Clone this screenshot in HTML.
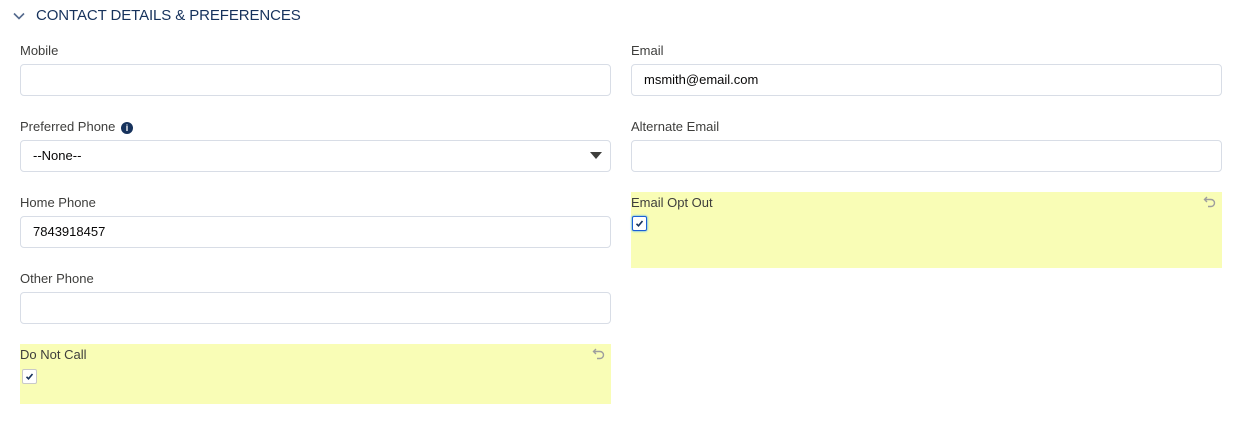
<!DOCTYPE html>
<html><head><style>
body{margin:0;width:1237px;height:424px;background:#fff;font-family:"Liberation Sans",sans-serif;position:relative;overflow:hidden}
.a{position:absolute}
.lbl{font-size:13px;color:#3e3e3c;line-height:16px}
.in{position:absolute;height:30px;border:1px solid #d8dde6;border-radius:4px;background:#fff;font-size:13px;color:#080707;line-height:30px;padding-left:12px;box-sizing:content-box}
.yl{position:absolute;background:#f9fdb6}
.cb{position:absolute;width:13px;height:13px;border:1px solid #c9c9c9;border-radius:2px;background:#fff}
</style></head><body>
<svg class="a" style="left:12px;top:10px" width="14" height="12" viewBox="0 0 14 12"><path d="M2 3.5 L7 8.5 L12 3.5" fill="none" stroke="#54698d" stroke-width="1.6"/></svg>
<div class="a" style="left:36px;top:7px;font-size:15px;color:#16325c;line-height:18px;letter-spacing:-0.1px">CONTACT DETAILS &amp; PREFERENCES</div>

<div class="a lbl" style="left:20px;top:43px">Mobile</div>
<div class="in" style="left:20px;top:64px;width:577px"></div>
<div class="a lbl" style="left:20px;top:119px">Preferred Phone</div>
<div class="a" style="left:121px;top:122px;width:12px;height:12px;border-radius:50%;background:#16325c;color:#fff;font-size:9px;font-weight:bold;text-align:center;line-height:12px">i</div>
<div class="in" style="left:20px;top:140px;width:577px">--None--</div>
<svg class="a" style="left:590px;top:152px" width="12" height="8"><path d="M0 0 L12 0 L6 7Z" fill="#3e3e3c"/></svg>
<div class="a lbl" style="left:20px;top:195px">Home Phone</div>
<div class="in" style="left:20px;top:216px;width:577px">7843918457</div>
<div class="a lbl" style="left:20px;top:271px">Other Phone</div>
<div class="in" style="left:20px;top:292px;width:577px"></div>
<div class="yl" style="left:20px;top:344px;width:591px;height:60px"></div>
<div class="a lbl" style="left:20px;top:347px">Do Not Call</div>
<div class="cb" style="left:22px;top:369px"></div>
<svg class="a" style="left:22px;top:369px" width="15" height="15"><path d="M4.5 7.8 L6.5 9.8 L10.5 5" fill="none" stroke="#16325c" stroke-width="1.6"/></svg>
<svg class="a" style="left:592px;top:347px" width="14" height="14" viewBox="0 0 14 14"><path d="M4 2 L1.5 4.5 L4 7 M1.8 4.5 H8 A3.5 3.5 0 0 1 8 11.5 H5" fill="none" stroke="#9e9e9e" stroke-width="1.4"/></svg>

<div class="a lbl" style="left:631px;top:43px">Email</div>
<div class="in" style="left:631px;top:64px;width:577px">msmith@email.com</div>
<div class="a lbl" style="left:631px;top:119px">Alternate Email</div>
<div class="in" style="left:631px;top:140px;width:577px"></div>
<div class="yl" style="left:631px;top:192px;width:591px;height:76px"></div>
<div class="a lbl" style="left:631px;top:195px">Email Opt Out</div>
<div class="cb" style="left:632px;top:216px;border:1px solid #1b5fd6;box-shadow:0 0 2px #1b96ff"></div>
<svg class="a" style="left:632px;top:216px" width="15" height="15"><path d="M4.5 7.8 L6.5 9.8 L10.5 5" fill="none" stroke="#16325c" stroke-width="1.6"/></svg>
<svg class="a" style="left:1203px;top:195px" width="14" height="14" viewBox="0 0 14 14"><path d="M4 2 L1.5 4.5 L4 7 M1.8 4.5 H8 A3.5 3.5 0 0 1 8 11.5 H5" fill="none" stroke="#9e9e9e" stroke-width="1.4"/></svg>
</body></html>
